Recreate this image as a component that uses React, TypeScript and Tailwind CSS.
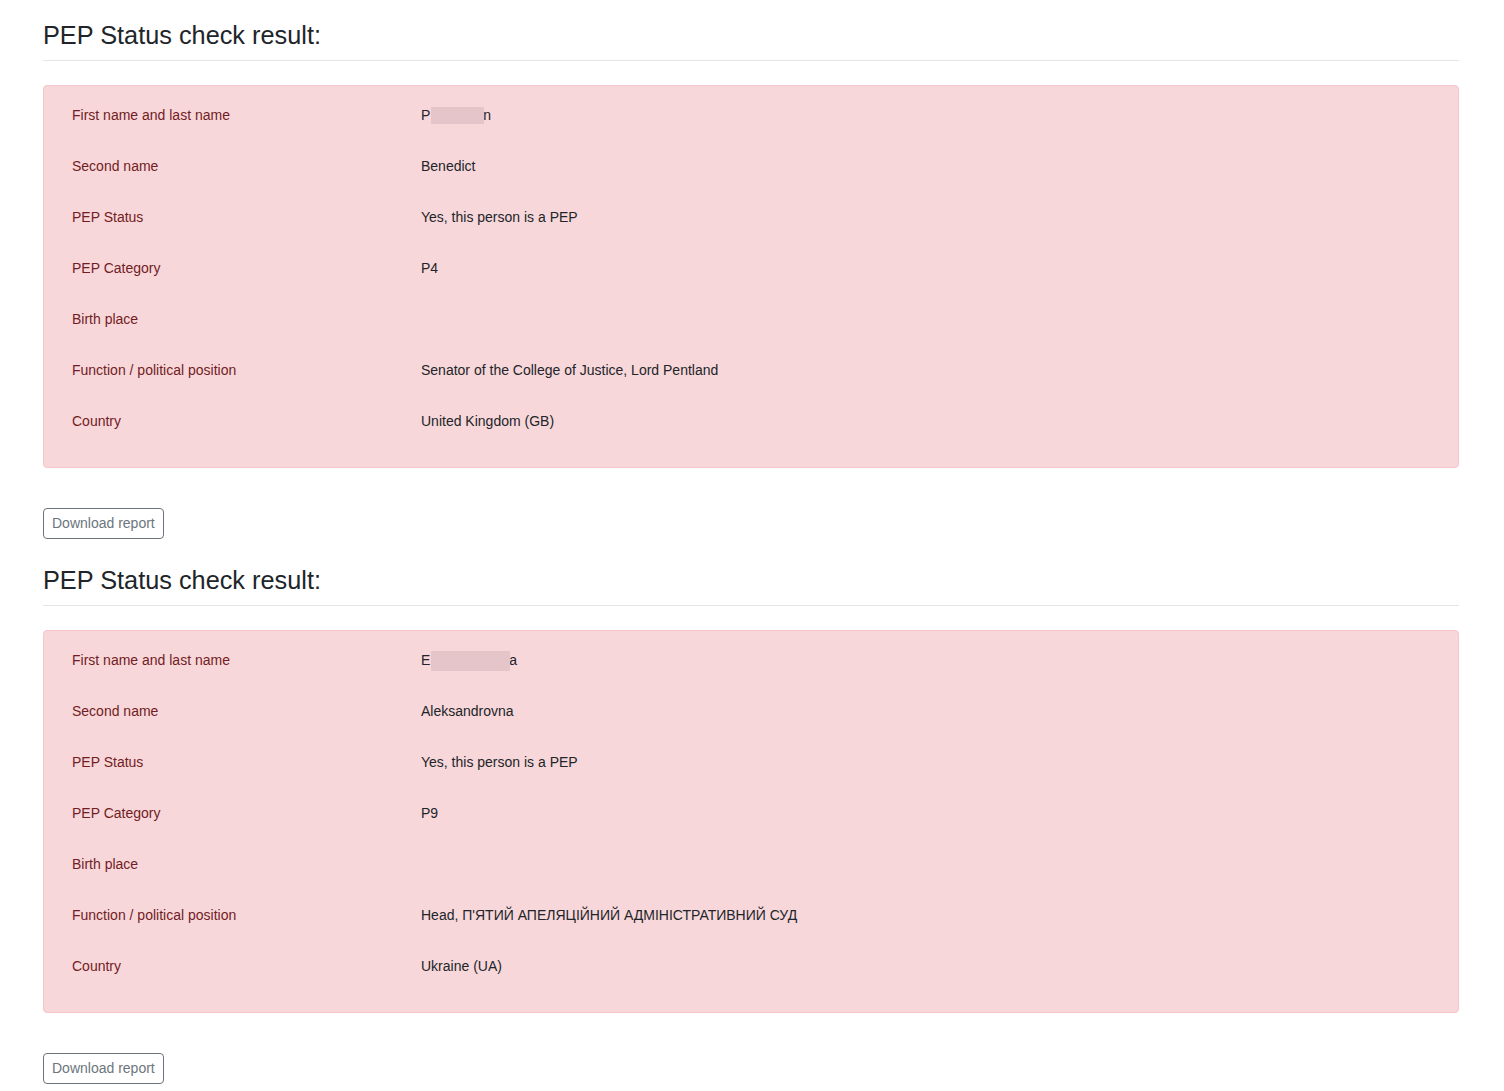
import React from "react";

interface Field {
  label: string;
  value: React.ReactNode;
}

interface Result {
  fields: Field[];
}

function Redacted({ first, last, width, height, offset }: { first: string; last: string; width: number; height: number; offset: number }) {
  return (
    <span className="relative inline-block">
      {first}
      <span className="inline-block w-[2px]" />
      <span style={{ width, height, top: offset }} className="absolute left-[10px] bg-[#e5c5ca]" />
      <span style={{ width: width - 2 }} className="inline-block" />
      {last}
    </span>
  );
}

const results: Result[] = [
  {
    fields: [
      { label: "First name and last name", value: <Redacted first="P" last="n" width={53} height={17} offset={2} /> },
      { label: "Second name", value: "Benedict" },
      { label: "PEP Status", value: "Yes, this person is a PEP" },
      { label: "PEP Category", value: "P4" },
      { label: "Birth place", value: "" },
      { label: "Function / political position", value: "Senator of the College of Justice, Lord Pentland" },
      { label: "Country", value: "United Kingdom (GB)" },
    ],
  },
  {
    fields: [
      { label: "First name and last name", value: <Redacted first="E" last="a" width={79} height={20} offset={1} /> },
      { label: "Second name", value: "Aleksandrovna" },
      { label: "PEP Status", value: "Yes, this person is a PEP" },
      { label: "PEP Category", value: "P9" },
      { label: "Birth place", value: "" },
      { label: "Function / political position", value: "Head, П'ЯТИЙ АПЕЛЯЦІЙНИЙ АДМІНІСТРАТИВНИЙ СУД" },
      { label: "Country", value: "Ukraine (UA)" },
    ],
  },
];

function ResultSection({ result, first }: { result: Result; first: boolean }) {
  return (
    <section className={first ? "" : "mt-[26px]"}>
      {/* Heading */}
      <h2 className="h-[30px] text-[25.3px] leading-[30px] text-[#212529] font-normal">PEP Status check result:</h2>
      <hr className="mt-[10px] border-0 border-t border-[#e5e5e5]" />

      {/* Alert with details */}
      <div className="mt-[24px] rounded-[4px] border border-[#f5c6cb] bg-[#f8d7da] pl-[28px] pr-[20px] pt-[19px] pb-[5px] text-[14px] leading-[21px]">
        {result.fields.map((f) => (
          <div key={f.label} className="flex h-[51px]">
            <div className="w-[349px] shrink-0 text-[#721c24]">{f.label}</div>
            <div className="text-[#212529]">{f.value}</div>
          </div>
        ))}
      </div>

      <button className="mt-[40px] block rounded-[4px] border border-[#6c757d] bg-white px-[8px] py-[4px] text-[14px] leading-[21px] text-[#6c757d]">
        Download report
      </button>
    </section>
  );
}

export default function App() {
  return (
    <div className="min-h-screen bg-white pl-[43px] pr-[45px] pt-[20px] pb-[10px]" style={{ fontFamily: '"Liberation Sans", Arial, sans-serif' }}>
      {results.map((r, i) => (
        <ResultSection key={i} result={r} first={i === 0} />
      ))}
    </div>
  );
}
